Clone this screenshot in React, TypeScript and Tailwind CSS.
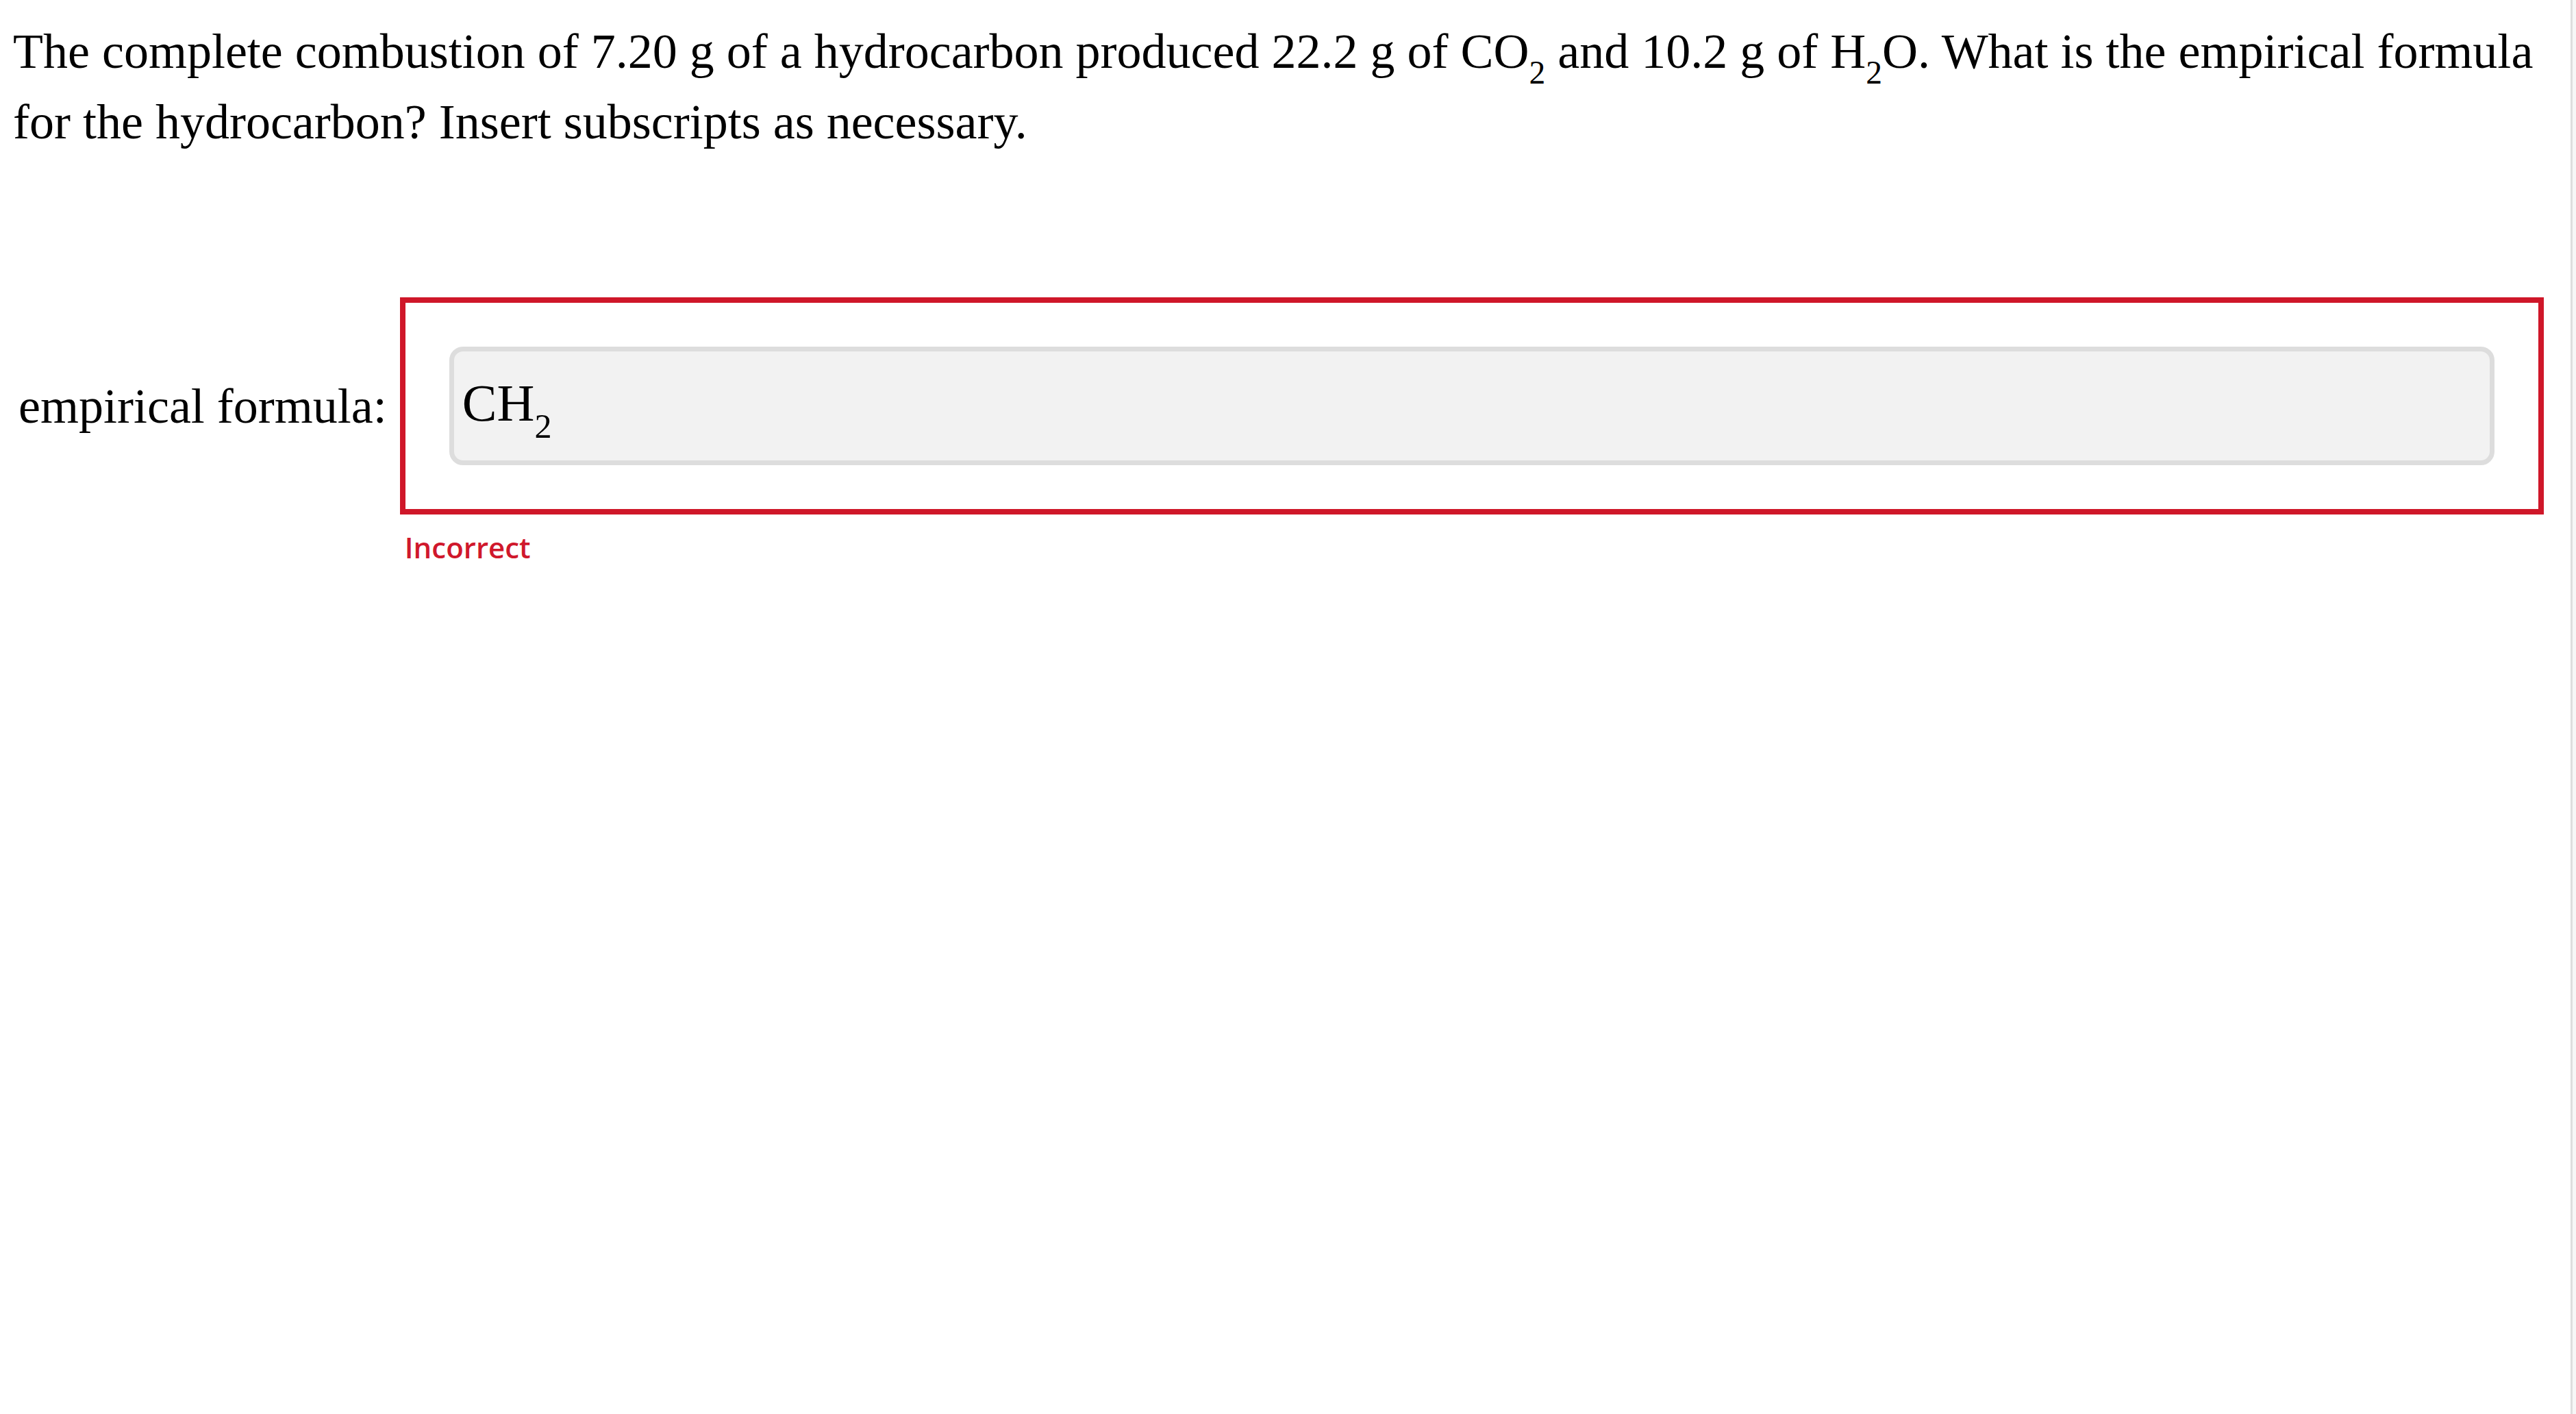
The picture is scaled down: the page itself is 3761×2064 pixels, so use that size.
import React from 'react'

const serif = "font-['Liberation_Serif','Times_New_Roman',serif]"

function Sub({ children }: { children: React.ReactNode }) {
  return <sub className="text-[0.66em] leading-none align-[-0.24em]">{children}</sub>
}

export default function App() {
  return (
    <div className="flex h-[2064px] w-full bg-white text-black">
      {/* question content */}
      <div className="flex-1 min-w-0">
        <p className={`${serif} pl-[19px] pr-[30px] pt-[24px] text-[72px] leading-[103px]`}>
          The complete combustion of 7.20 g of a hydrocarbon produced 22.2 g of CO<Sub>2</Sub> and 10.2 g of H
          <Sub>2</Sub>O. What is the empirical formula for the hydrocarbon? Insert subscripts as necessary.
        </p>

        <div className="mt-[204px] grid grid-cols-[auto_1fr] gap-x-[19px] pl-[27px] pr-[39px]">
          <label className={`${serif} self-center text-[72px] leading-none`}>empirical formula:</label>

          <div className="border-[8px] border-[#cf1729] p-[64px]">
            <div className="flex h-[173px] items-center rounded-[20px] border-[7px] border-[#dddddd] bg-[#f2f2f2] pl-[12px]">
              <span className={`${serif} text-[76px] leading-none`}>
                CH<Sub>2</Sub>
              </span>
            </div>
          </div>

          <div />
          <div className="mt-[16px] pl-[7px] font-['Open_Sans',sans-serif] text-[42px] font-semibold leading-normal text-[#d0182c]">
            Incorrect
          </div>
        </div>
      </div>

      {/* scrollbar strip */}
      <div className="w-[8px] shrink-0 border-l-[3px] border-[#dedede] bg-[#f7f7f7]" />
    </div>
  )
}
